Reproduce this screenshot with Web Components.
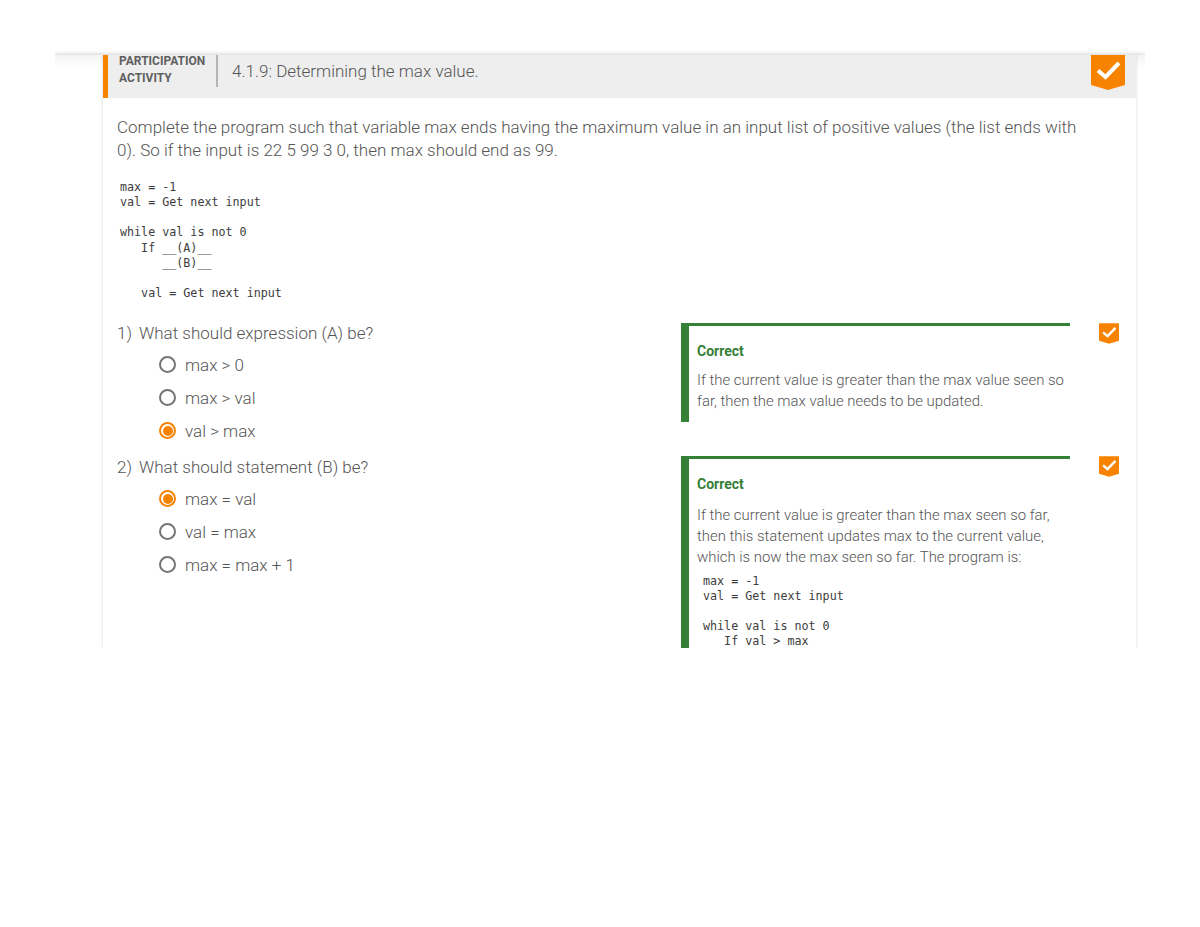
<!DOCTYPE html>
<html>
<head>
<meta charset="utf-8">
<title>Participation activity</title>
<style>
  html, body { margin: 0; padding: 0; background: #fff; }
  body { font-family: Roboto, "Liberation Sans", sans-serif; color: #666; }
</style>
</head>
<body>
<activity-page>
  <activity-header slot="header" label-top="PARTICIPATION" label-bottom="ACTIVITY">4.1.9: Determining the max value.</activity-header>
  <p slot="intro">Complete the program such that variable max ends having the maximum value in an input list of positive values (the list ends with 0). So if the input is 22 5 99 3 0, then max should end as 99.</p>
  <code-block slot="code" code="max = -1
val = Get next input

while val is not 0
   If __(A)__
      __(B)__

   val = Get next input"></code-block>

  <question-row slot="questions" number="1)" prompt="What should expression (A) be?" options="max &gt; 0|max &gt; val|val &gt; max" selected="2">
    <feedback-box style="--head-gap: 9.5px">
      If the current value is greater than the max value seen so far, then the max value needs to be updated.
    </feedback-box>
  </question-row>

  <question-row slot="questions" number="2)" prompt="What should statement (B) be?" options="max = val|val = max|max = max + 1" selected="0">
    <feedback-box style="--head-gap: 11.5px; margin-top: -1px">
      If the current value is greater than the max seen so far, then this statement updates max to the current value, which is now the max seen so far. The program is:
      <code-block slot="extra" inset code="max = -1
val = Get next input

while val is not 0
   If val &gt; max"></code-block>
    </feedback-box>
  </question-row>
</activity-page>

<script>
const CHECK_SVG = `
  <svg viewBox="0 0 34 35" width="100%" height="100%" aria-hidden="true" style="display:block">
    <path d="M0 0H34V30L17 35L0 30Z" fill="#f78300"/>
    <path d="M7 15.5L14.5 22L28 8" fill="none" stroke="#fff" stroke-width="4"/>
  </svg>`;

class ActivityPage extends HTMLElement {
  connectedCallback() {
    const shadow = this.attachShadow({ mode: 'open' });
    shadow.innerHTML = `
      <style>
        :host { display: block; padding-top: 55px; }
        .sheet {
          position: relative;
          width: 1090px;
          height: 593px;
          margin-left: 55px;
          overflow: hidden;
          box-shadow: 0 -1px 4px rgba(0,0,0,.18);
          clip-path: inset(-6px 0 0 0);
          background: linear-gradient(#f4f4f4, #fff 12px);
        }
        .card {
          width: 1033px;
          height: 100%;
          margin-left: 48px;
          background: #fff;
          box-shadow: 0 0 3px rgba(0,0,0,.16);
        }
        .body { padding: 18px 13px 0 14px; }
        ::slotted(p) {
          margin: 0;
          font: 300 17px/23px Roboto, sans-serif;
          color: #555;
          max-width: 975px;
        }
        .code { margin: 18px 0 20px 3px; }
      </style>
      <div class="sheet">
        <div class="card">
          <slot name="header"></slot>
          <div class="body">
            <slot name="intro"></slot>
            <div class="code"><slot name="code"></slot></div>
            <slot name="questions"></slot>
          </div>
        </div>
      </div>
    `;
  }
}

class ActivityHeader extends HTMLElement {
  connectedCallback() {
    const shadow = this.attachShadow({ mode: 'open' });
    shadow.innerHTML = `
      <style>
        :host {
          display: flex;
          align-items: flex-start;
          height: 43px;
          background: #eee;
          border-left: 5px solid #f78300;
          position: relative;
        }
        .label {
          width: 102px;
          padding: 0 0 0 11px;
          box-sizing: border-box;
          font: 700 12px/16.5px Roboto, sans-serif;
          color: #5f5f5f;
        }
        .label div:first-child { margin-top: -2px; }
        .rule { width: 2px; height: 32px; background: #b4b4b4; margin: 0 14px 0 6px; flex: none; }
        .title { font: 300 17px/32px Roboto, sans-serif; color: #555; }
        .badge { position: absolute; top: 0; right: 11px; width: 34px; height: 35px; }
      </style>
      <div class="label">
        <div>${this.getAttribute('label-top')}</div>
        <div>${this.getAttribute('label-bottom')}</div>
      </div>
      <div class="rule"></div>
      <div class="title"><slot></slot></div>
      <div class="badge">${CHECK_SVG}</div>
    `;
  }
}

class CodeBlock extends HTMLElement {
  connectedCallback() {
    const shadow = this.attachShadow({ mode: 'open' });
    shadow.innerHTML = `
      <style>
        :host { display: block; }
        :host([inset]) { margin: 6px 0 0 6px; }
        pre {
          margin: 0;
          font: 400 11.7px/15.15px "DejaVu Sans Mono", monospace;
          color: #3c3c3c;
        }
      </style>
      <pre></pre>
    `;
    shadow.querySelector('pre').textContent = this.getAttribute('code');
  }
}

class RadioOption extends HTMLElement {
  connectedCallback() {
    const shadow = this.attachShadow({ mode: 'open' });
    shadow.innerHTML = `
      <style>
        :host { display: flex; align-items: center; height: 33px; }
        .ring {
          width: 17px; height: 17px; box-sizing: border-box;
          border: 2.5px solid #757575; border-radius: 50%;
          margin-right: 9px; flex: none; position: relative;
        }
        :host([checked]) .ring { border-color: #f78300; }
        :host([checked]) .ring::after {
          content: ""; position: absolute; inset: 1.5px;
          background: #f78300; border-radius: 50%;
        }
        .text { font: 300 17px/20px Roboto, sans-serif; color: #555; }
      </style>
      <div class="ring"></div>
      <div class="text"><slot></slot></div>
    `;
  }
}

class QuestionRow extends HTMLElement {
  connectedCallback() {
    const shadow = this.attachShadow({ mode: 'open' });
    const options = this.getAttribute('options').split('|');
    const selected = Number(this.getAttribute('selected'));
    shadow.innerHTML = `
      <style>
        :host { display: flex; align-items: flex-start; margin-bottom: 8px; position: relative; }
        .left { width: 564px; flex: none; }
        .prompt { font: 300 17px/24px Roboto, sans-serif; color: #555; display: flex; margin-bottom: 3px; }
        .num { width: 22px; flex: none; }
        .options { padding-left: 42px; }
        .right { flex: 1; margin-top: 2px; }
      </style>
      <div class="left">
        <div class="prompt"><span class="num">${this.getAttribute('number')}</span><span>${this.getAttribute('prompt')}</span></div>
        <div class="options"></div>
      </div>
      <div class="right"><slot></slot></div>
    `;
    const box = shadow.querySelector('.options');
    options.forEach((text, i) => {
      const opt = document.createElement('radio-option');
      opt.textContent = text;
      if (i === selected) opt.setAttribute('checked', '');
      box.append(opt);
    });
  }
}

class FeedbackBox extends HTMLElement {
  connectedCallback() {
    const shadow = this.attachShadow({ mode: 'open' });
    shadow.innerHTML = `
      <style>
        :host { display: flex; align-items: flex-start; }
        .box {
          width: 389px;
          box-sizing: border-box;
          padding: 16px 0 10.5px 8px;
          border-left: 8px solid #348037;
          border-top: 3px solid #348037;
          flex: none;
        }
        .head { font: 700 14px/18px Roboto, sans-serif; color: #348037; margin-bottom: var(--head-gap, 10px); }
        .msg { font: 300 14.9px/21px Roboto, sans-serif; color: #555; }
        .badge { width: 20px; height: 21px; margin-left: 29px; flex: none; }
      </style>
      <div class="box">
        <div class="head">Correct</div>
        <div class="msg"><slot></slot></div>
        <slot name="extra"></slot>
      </div>
      <div class="badge">${CHECK_SVG}</div>
    `;
  }
}

customElements.define('code-block', CodeBlock);
customElements.define('radio-option', RadioOption);
customElements.define('feedback-box', FeedbackBox);
customElements.define('question-row', QuestionRow);
customElements.define('activity-header', ActivityHeader);
customElements.define('activity-page', ActivityPage);
</script>
</body>
</html>
